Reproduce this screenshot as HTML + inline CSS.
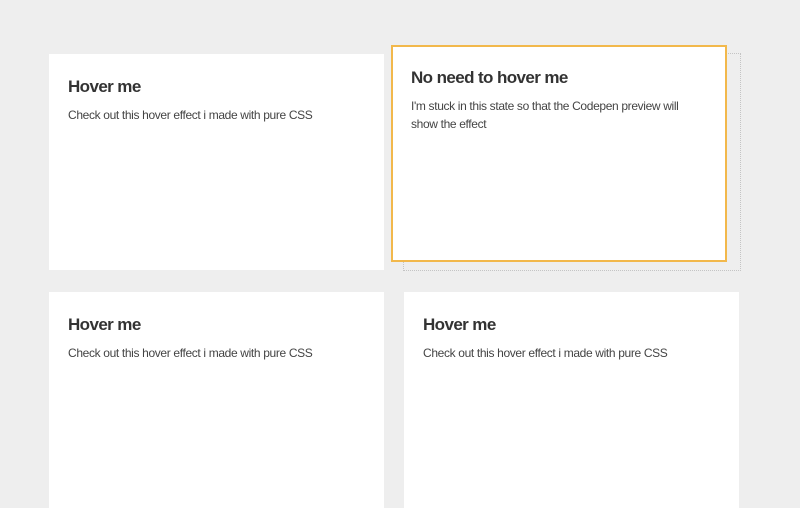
<!DOCTYPE html>
<html><head><style>
html,body{margin:0;padding:0;background:#eeeeee;width:800px;height:450px;overflow:hidden;font-family:"Liberation Sans",sans-serif;}
.card{position:absolute;background:#fff;width:335px;height:216px;box-sizing:border-box;padding:0 19px;color:#3a3a3a;}
h2{margin:0;padding-top:22px;font-size:17px;letter-spacing:-0.6px;font-weight:bold;color:#333;line-height:22px;}
p{margin:8px 0 0;font-size:12px;letter-spacing:-0.35px;line-height:18px;color:#444;}
.ghost{position:absolute;left:403px;top:53px;width:338px;height:218px;box-sizing:border-box;border:1px dotted #c4c4c4;}
.active{position:absolute;left:391px;top:45px;width:336px;height:217px;box-sizing:border-box;border:2px solid #f2b84b;background:#fff;padding:0 18px;}
</style></head><body>
<div class="card" style="left:49px;top:54px;"><h2>Hover me</h2><p>Check out this hover effect i made with pure CSS</p></div>
<div class="ghost"></div>
<div class="active" style="color:#3a3a3a"><h2 style="padding-top:20px">No need to hover me</h2><p>I'm stuck in this state so that the Codepen preview will show the effect</p></div>
<div class="card" style="left:49px;top:292px;"><h2>Hover me</h2><p>Check out this hover effect i made with pure CSS</p></div>
<div class="card" style="left:404px;top:292px;"><h2>Hover me</h2><p>Check out this hover effect i made with pure CSS</p></div>
</body></html>
